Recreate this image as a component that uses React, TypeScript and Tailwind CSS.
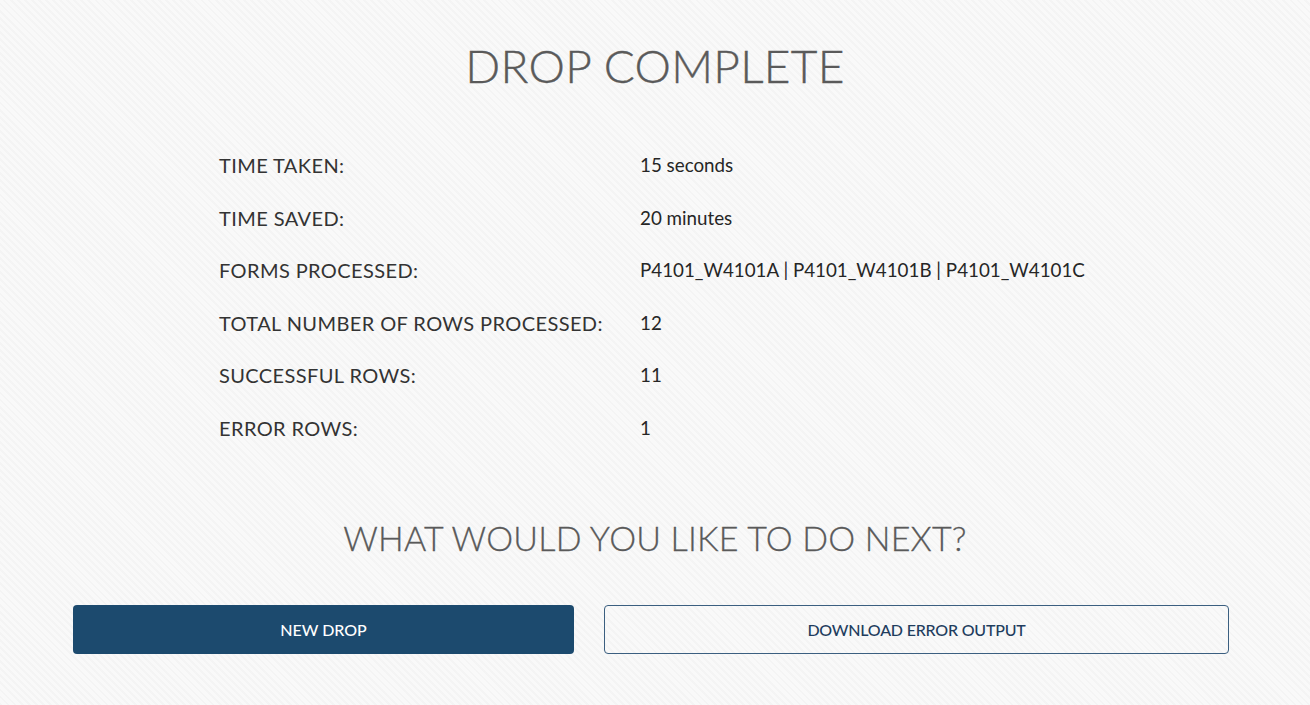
import React from "react";

const rows: [string, string][] = [
  ["TIME TAKEN:", "15 seconds"],
  ["TIME SAVED:", "20 minutes"],
  ["FORMS PROCESSED:", "P4101_W4101A | P4101_W4101B | P4101_W4101C"],
  ["TOTAL NUMBER OF ROWS PROCESSED:", "12"],
  ["SUCCESSFUL ROWS:", "11"],
  ["ERROR ROWS:", "1"],
];

export default function App() {
  return (
    <div className="w-[1310px] h-[705px] overflow-hidden bg-[#f7f7f7] bg-[repeating-linear-gradient(45deg,rgba(0,0,0,0.012)_0px,rgba(0,0,0,0.012)_2px,rgba(255,255,255,0.25)_2px,rgba(255,255,255,0.25)_5px)] flex flex-col">
      <h1 className="mt-[38px] text-center text-[46px] leading-[56px] font-light text-[#5a5a5a] tracking-[0.3px] font-['Lato',sans-serif] [-webkit-text-stroke:0.4px_#5a5a5a]">
        DROP COMPLETE
      </h1>
      <div className="mt-[45px] flex flex-col pl-[219px]">
        {rows.map(([k, v]) => (
          <div key={k} className="flex items-center h-[52.5px]">
            <div className="w-[421px] text-[20px] text-[#333] font-['Lato',sans-serif] tracking-[0.4px]">{k}</div>
            <div className="text-[18.8px] text-[#262626] font-['Lato',sans-serif]">{v}</div>
          </div>
        ))}
      </div>
      <h2 className="mt-[64px] text-center text-[34px] leading-[40px] font-light text-[#5a5a5a] tracking-[0.2px] font-['Lato',sans-serif] [-webkit-text-stroke:0.3px_#5a5a5a]">
        WHAT WOULD YOU LIKE TO DO NEXT?
      </h2>
      <div className="mt-[47px] flex pl-[73px] gap-[30px]">
        <button className="w-[501px] h-[49px] rounded-[4px] bg-[#1c4a6e] text-white text-[16px] font-medium font-['Lato',sans-serif]">
          NEW DROP
        </button>
        <button className="w-[625px] h-[49px] rounded-[4px] border-[1.5px] border-[#3b5f80] text-[#1f3d5e] text-[16px] font-medium tracking-[-0.2px] font-['Lato',sans-serif]">
          DOWNLOAD ERROR OUTPUT
        </button>
      </div>
    </div>
  );
}
